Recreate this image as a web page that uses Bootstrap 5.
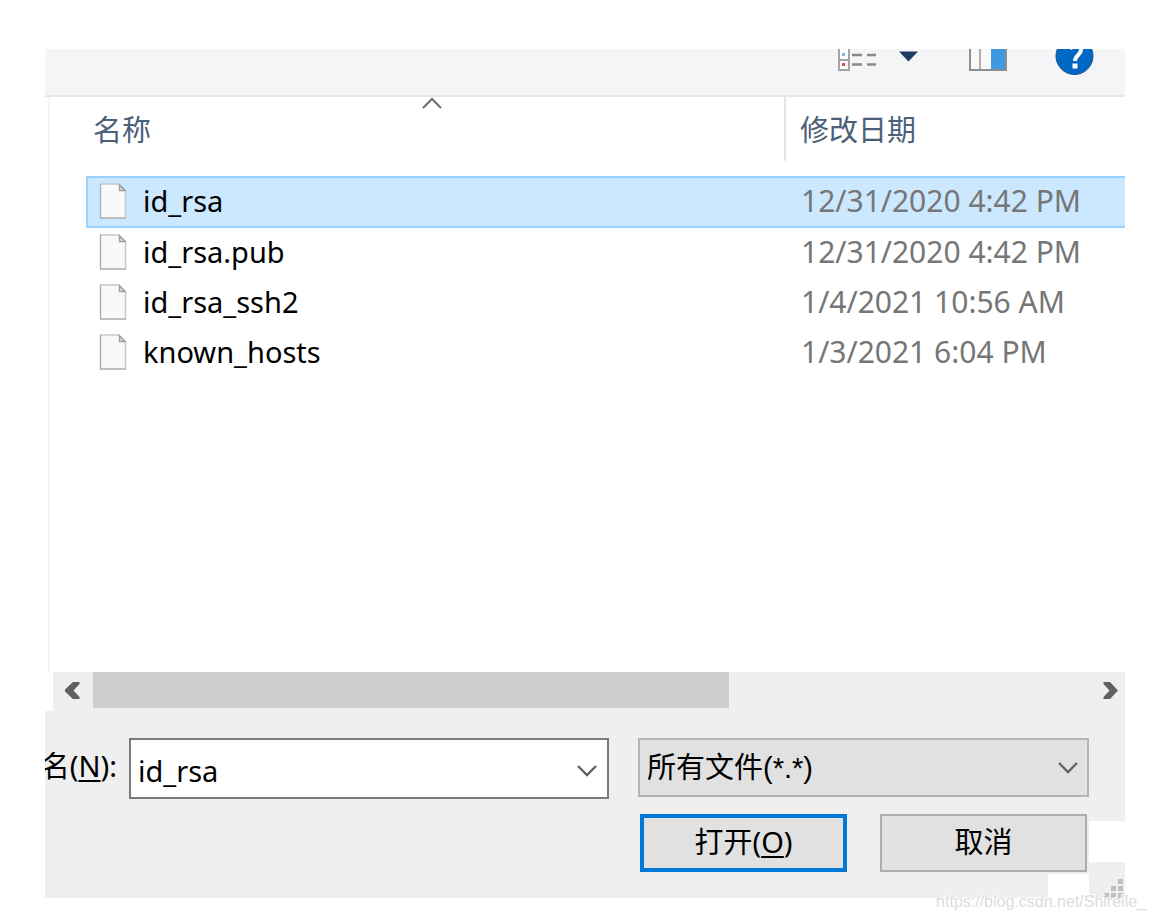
<!DOCTYPE html>
<html lang="zh-CN">
<head>
<meta charset="utf-8">
<meta name="viewport" content="width=device-width, initial-scale=1">
<title>打开</title>
<link href="https://cdn.jsdelivr.net/npm/bootstrap@5.3.0/dist/css/bootstrap.min.css" rel="stylesheet">
<style>
  body { font-family: "Noto Sans", "Noto Sans CJK SC", sans-serif; font-size: 29px; line-height: 40px; color: #000; background: #fff; }
  .page { min-height: 100vh; padding: 49px 31px 22px 45px; }
  .dialog { background: #efefef; }
  .toolbar { height: 48px; background: #f4f5f7; border-bottom: 2px solid #e6e8e8; padding-right: 30px; }
  .tool { height: 30px; }
  .pane { background: #fff; padding-left: 3px; }
  .pane-body { border-left: 2px solid #f4f4f4; padding-left: 36px; }
  .files { table-layout: fixed; }
  .files th { height: 64px; font-weight: 400; color: #4c607a; padding: 2px 0 0 7px; }
  .files th + th { width: 340px; border-left: 2px solid #e5e5e5; padding-left: 14px; }
  .files tbody::before { content: ""; display: block; height: 15px; }
  .files td { height: 50px; padding: 0 0 2px 16px; white-space: nowrap; }
  .files td:first-child { padding-left: 13px; }
  .files td + td { color: #767676; font-size: 30px; }
  .files .picked td { height: 52px; background: #cce8ff; box-shadow: inset 0 2px #99d1ff, inset 0 -2px #99d1ff; }
  .files .picked td:first-child { box-shadow: inset 0 2px #99d1ff, inset 0 -2px #99d1ff, inset 2px 0 #99d1ff; }
  .sort { left: calc(50% - 13px); top: 0; }
  .scroller { height: 39px; margin-left: 5px; background: #efefef; }
  .scroller button { width: 40px; height: 36px; }
  .thumb { height: 36px; background: #cdcdcd; }
  .controls { padding: 27px 36px 26px 0; }
  .name-label { width: 72px; height: 40px; }
  .name-box { height: 61px; margin-left: 12px; margin-right: 29px; border: 2px solid #7a7a7a; background: #fff; }
  .name-box input { font: inherit; padding: 4px 0 0 7px; color: #000; outline: 0; }
  .name-box button { width: 38px; }
  .filter { width: 451px; }
  .filter select { height: 59px; border: 2px solid #b4b4b4; background: #e1e1e1; padding: 0 8px 0 7px; color: #000; appearance: none; font-family: "Liberation Sans", "Noto Sans CJK SC", sans-serif; }
  .filter svg { right: 11px; top: 23px; }
  .actions { margin-top: 15px; padding-right: 2px; gap: 33px; }
  .act { width: 207px; height: 58px; border: 2px solid #adadad; background: #e1e1e1; color: #000; padding: 0 0 2px; }
  .act.main { border: 4px solid #0078d7; }
  u { text-underline-offset: 3px; text-decoration-thickness: 2px; text-decoration-skip-ink: none; }
  .gap-a { right: 0; bottom: 36px; width: 36px; height: 41px; }
  .gap-b { right: 36px; bottom: 0; width: 41px; height: 24px; }
  .grip { right: 1px; bottom: 0; }
  .watermark { right: 10px; bottom: 8px; font: 16px/20px "Liberation Sans", sans-serif; color: #dcdcdc; text-shadow: -1px -1px #fff; }
</style>
</head>
<body>
<svg class="d-none">
  <symbol id="file" viewBox="0 0 28 38">
    <path d="M1.500 2H20L26.500 8.500V36H1.500Z" fill="#f8f9fa" stroke="#c6c8c9" stroke-width="1.500"/>
    <path d="M1.500 2V36M1 36H27" fill="none" stroke="#a9abac" stroke-width="1"/>
    <path d="M20.500 3V8.500H26Z" fill="#e4e4e4" stroke="#a0a0a0" stroke-width="1.500"/>
  </symbol>
  <symbol id="down" viewBox="0 0 20 14"><path d="M1 2L10 11L19 2" fill="none" stroke="#606060" stroke-width="2.300"/></symbol>
</svg>
<main class="page d-flex position-relative">
  <div class="dialog d-flex flex-column flex-grow-1 position-relative overflow-hidden">
    <div class="toolbar d-flex justify-content-end align-items-start">
      <button class="tool btn border-0 p-0 d-flex rounded-0" aria-label="更改视图">
        <svg width="86" height="30">
          <rect x="5" y="-1" width="10" height="22" fill="#fff" stroke="#a3a3a3" stroke-width="2"/>
          <path d="M5 11H15" stroke="#a3a3a3" stroke-width="2"/>
          <rect x="8" y="4" width="3" height="3" fill="#7db1ff"/><rect x="8" y="14" width="3" height="3" fill="#e04848"/>
          <path d="M18 6H28M33 6H42M18 15.500H28M33 15.500H42" stroke="#888" stroke-width="2.500"/>
          <path d="M65 2.500H84L74.500 12.500Z" fill="#1f3a63"/>
        </svg>
      </button>
      <button class="tool btn border-0 p-0 d-flex rounded-0 ms-5" aria-label="预览窗格">
        <svg width="39" height="30">
          <rect x="2" y="-2" width="36" height="23" fill="#f9f9f9" stroke="#8b8f92" stroke-width="2"/>
          <path d="M12 0V20" stroke="#b0b0b0" stroke-width="2"/><path d="M23 0H37V20H23Z" fill="#3f98e2"/>
        </svg>
      </button>
      <button class="tool btn border-0 p-0 d-flex rounded-0 ms-5" aria-label="帮助">
        <svg width="40" height="30">
          <circle cx="19.500" cy="7" r="18.500" fill="#0067c5" stroke="#16518c"/>
          <path d="M15 0C17 -4 26 -4 26 1C26 6 20 6 20 12" fill="none" stroke="#fff" stroke-width="4"/><rect x="17.500" y="14.500" width="5" height="5" fill="#fff"/>
        </svg>
      </button>
    </div>
    <section class="pane d-flex flex-column flex-grow-1">
      <div class="pane-body flex-grow-1">
        <table class="files w-100">
          <thead>
            <tr>
              <th class="position-relative" scope="col">名称
                <svg class="sort position-absolute" width="20" height="14"><path d="M1 11L10 2L19 11" fill="none" stroke="#6b6b6b" stroke-width="2"/></svg>
              </th>
              <th scope="col">修改日期</th>
            </tr>
          </thead>
          <tbody>
            <tr class="picked"><td><div class="d-flex align-items-center gap-3"><svg width="28" height="38"><use href="#file"/></svg>id_rsa</div></td><td>12/31/2020 4:42 PM</td></tr>
            <tr><td><div class="d-flex align-items-center gap-3"><svg width="28" height="38"><use href="#file"/></svg>id_rsa.pub</div></td><td>12/31/2020 4:42 PM</td></tr>
            <tr><td><div class="d-flex align-items-center gap-3"><svg width="28" height="38"><use href="#file"/></svg>id_rsa_ssh2</div></td><td>1/4/2021 10:56 AM</td></tr>
            <tr><td><div class="d-flex align-items-center gap-3"><svg width="28" height="38"><use href="#file"/></svg>known_hosts</div></td><td>1/3/2021 6:04 PM</td></tr>
          </tbody>
        </table>
      </div>
      <div class="scroller d-flex">
        <button class="btn border-0 rounded-0 p-0 d-flex align-items-center ps-2" aria-label="向左滚动"><svg class="ms-1" width="18" height="20"><path d="M8 2H14.500V4L8.500 10.500L14.500 17V19H8L-1 10.500Z" fill="#606060"/></svg></button>
        <div class="flex-grow-1"><div class="thumb" style="width:64.100%"></div></div>
        <button class="btn border-0 rounded-0 p-0 d-flex align-items-center justify-content-end pe-1" aria-label="向右滚动"><svg width="18" height="20"><path d="M7 2H.500V4L6.500 10.500L.500 17V19H7L15 10.500Z" fill="#606060"/></svg></button>
      </div>
    </section>
    <form class="controls">
      <div class="d-flex align-items-start">
        <label for="filename" class="name-label mt-2 d-flex justify-content-end overflow-hidden text-nowrap flex-shrink-0"><span>名(<u>N</u>):</span></label>
        <div class="name-box d-flex flex-grow-1">
          <input id="filename" class="border-0 bg-transparent flex-grow-1 w-100" type="text" value="id_rsa">
          <button type="button" class="btn border-0 rounded-0 p-0 d-flex align-items-center flex-shrink-0 pt-1 ps-2" aria-label="文件名列表"><svg width="20" height="14"><use href="#down"/></svg></button>
        </div>
        <div class="filter position-relative flex-shrink-0">
          <select class="w-100" aria-label="文件类型"><option>所有文件(*.*)</option></select>
          <svg class="position-absolute pe-none" width="20" height="14"><use href="#down"/></svg>
        </div>
      </div>
      <div class="actions d-flex justify-content-end">
        <button type="button" class="act main">打开(<u>O</u>)</button>
        <button type="button" class="act">取消</button>
      </div>
    </form>
    <div class="gap-a position-absolute bg-white"></div>
    <div class="gap-b position-absolute bg-white"></div>
    <svg class="grip position-absolute" width="22" height="20"><path d="M16 1h5v5h-5zM9 8h5v5H9zM16 8h5v5h-5zM2 15h5v5H2zM9 15h5v5H9zM16 15h5v5h-5z" fill="#bfbfbf"/></svg>
  </div>
  <div class="watermark position-absolute">https://blog.csdn.net/Shirelle_</div>
</main>
<script src="https://cdn.jsdelivr.net/npm/bootstrap@5.3.0/dist/js/bootstrap.bundle.min.js"></script>
</body>
</html>
